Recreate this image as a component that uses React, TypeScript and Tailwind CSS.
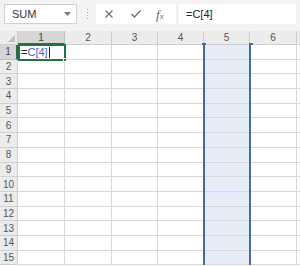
import React from "react";

const COLS = [1, 2, 3, 4, 5, 6];
const ROWS = Array.from({ length: 15 }, (_, i) => i + 1);
const colW = ["w-[47px]", "w-[47px]", "w-[46px]", "w-[46px]", "w-[46px]", "w-[47px]"];

function Toolbar() {
  return (
    <div className="h-[31px] bg-[#f3f3f3] flex items-start pt-[4px] pl-[4px] pr-[4px]">
      {/* name box */}
      <div className="w-[73px] h-[20px] bg-white border border-[#d0d0d0] flex items-center pl-[7px] pr-[5px]">
        <span className="text-[11px] text-[#333] flex-1">SUM</span>
        <svg width="7" height="4" viewBox="0 0 7 4">
          <path d="M0 0 H7 L3.5 4 Z" fill="#777" />
        </svg>
      </div>
      {/* grip */}
      <div className="ml-[10px] mt-[5px] flex flex-col gap-[2px]">
        <div className="w-[1px] h-[1px] bg-[#aaa]" />
        <div className="w-[1px] h-[1px] bg-[#aaa]" />
        <div className="w-[1px] h-[1px] bg-[#aaa]" />
        <div className="w-[1px] h-[1px] bg-[#aaa]" />
      </div>
      {/* buttons */}
      <div className="ml-[8px] w-[80px] h-[20px] bg-white flex items-center">
        <svg className="ml-[9px]" width="8" height="8" viewBox="0 0 8 8">
          <path d="M0.5 0.5 L7.5 7.5 M7.5 0.5 L0.5 7.5" stroke="#707070" strokeWidth="1.2" />
        </svg>
        <svg className="ml-[18px]" width="10" height="8" viewBox="0 0 10 8">
          <path d="M0.5 4 L3.5 7 L9.5 0.5" stroke="#707070" strokeWidth="1.3" fill="none" />
        </svg>
        <span className="ml-[15px] text-[13px] leading-none italic text-[#666] font-['Liberation_Serif',serif]">
          f<span className="text-[9px]">x</span>
        </span>
      </div>
      {/* formula box */}
      <div className="ml-[3px] flex-1 h-[20px] bg-white flex items-center pl-[7px]">
        <span className="text-[11px] text-[#222]">=C[4]</span>
      </div>
    </div>
  );
}

function Grid() {
  return (
    <div className="relative">
      {/* header row */}
      <div className="flex h-[14px]">
        <div className="relative w-[18px] shrink-0 bg-[#ececec] border-r border-b border-[#d0d0d0]">
          <svg className="absolute right-[2px] bottom-[2px]" width="7" height="7" viewBox="0 0 7 7">
            <path d="M7 0 V7 H0 Z" fill="#c2c2c2" />
          </svg>
        </div>
        {COLS.map((c, i) => (
          <div
            key={c}
            className={`${colW[i]} shrink-0 flex items-center justify-center text-[10px] border-r ${
              c === 1
                ? "bg-[#d6d6d6] text-[#444] border-b-2 border-b-[#217346] border-r-[#c0c0c0]"
                : "bg-[#ececec] text-[#555] border-b border-[#d0d0d0]"
            }`}
          >
            {c}
          </div>
        ))}
        <div className="flex-1 bg-[#ececec] border-b border-[#d0d0d0]" />
      </div>

      {ROWS.map((r) => (
        <div key={r} className="flex h-[14.7px]">
          <div
            className={`w-[18px] shrink-0 flex items-center justify-center text-[10px] border-b ${
              r === 1
                ? "bg-[#d6d6d6] text-[#444] border-r-2 border-r-[#217346] border-b-[#c0c0c0]"
                : "bg-[#ececec] text-[#555] border-r border-[#d0d0d0]"
            }`}
          >
            {r}
          </div>
          {COLS.map((c, i) => (
            <div
              key={c}
              className={`${colW[i]} shrink-0 border-r border-b border-[#d8d8d8] ${
                c === 5 ? "bg-[#e5edf9]" : "bg-white"
              }`}
            />
          ))}
          <div className="flex-1 border-b border-[#d8d8d8] bg-white" />
        </div>
      ))}

      {/* column 5 selection edges */}
      <div className="absolute left-[203px] top-[12px] bottom-0 w-[48px] border-x-2 border-[#4b6a9b] pointer-events-none" />
      <div className="absolute left-[202px] top-[12px] w-[4px] h-[2px] bg-[#4b6a9b]" />
      <div className="absolute left-[249px] top-[12px] w-[4px] h-[2px] bg-[#4b6a9b]" />

      {/* active cell */}
      <div className="absolute left-[18px] top-[13px] w-[48px] h-[16.5px] border-2 border-[#217346] flex items-center pl-[1px]">
        <span className="text-[11px] leading-none text-[#222]">
          =<span className="text-[#3c64c4]">C[4]</span>
        </span>
        <span className="ml-[1px] w-[1px] h-[11px] bg-[#222]" />
        <div className="absolute -right-[3px] -bottom-[3px] w-[4px] h-[4px] bg-[#217346] border border-white" />
      </div>
    </div>
  );
}

export default function App() {
  return (
    <div className="w-[300px] h-[266px] overflow-hidden bg-white font-['Liberation_Sans',Arial,sans-serif]">
      <Toolbar />
      <Grid />
    </div>
  );
}
